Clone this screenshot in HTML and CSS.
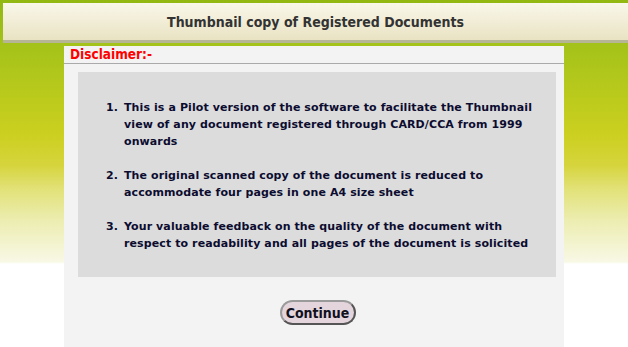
FILE: index.html
```html
<!DOCTYPE html>
<html lang="en">
<head>
    <meta charset="UTF-8">
    <title>Thumbnail copy of Registered Documents</title>
    <link rel="stylesheet" href="styles.css">
</head>
<body>

    <div class="page-header">
        <h1 class="page-title">Thumbnail copy of Registered Documents</h1>
    </div>

    <div class="panel">
        <div class="panel-head">Disclaimer:-</div>
        <div class="notice-box">
            <ol class="notice-list">
                <li>This is a Pilot version of the software to facilitate the Thumbnail view of any document registered through CARD/CCA from 1999 onwards</li>
                <li>The original scanned copy of the document is reduced to accommodate four pages in one A4 size sheet</li>
                <li>Your valuable feedback on the quality of the document with respect to readability and all pages of the document is solicited</li>
            </ol>
        </div>
        <div class="actions">
            <button class="btn-continue" type="button">Continue</button>
        </div>
    </div>

</body>
</html>
```

FILE: styles.css
```css
/* general */
body {
    margin: 0;
    min-height: 347px;
    background: #fff linear-gradient(to bottom,
        #92b814 0px,
        #a4c21a 45px,
        #bccb1c 100px,
        #ccd020 135px,
        #d6d43c 165px,
        #e2e27a 190px,
        #ecedb0 220px,
        #f8f8e6 262px,
        #ffffff 264px) no-repeat;
    background-size: 100% 264px;
    font-family: "DejaVu Sans", sans-serif;
}

/* header bar */
.page-header {
    margin: 3px 0 0 3px;
    height: 37px;
    border-bottom: 3px solid #b6b696;
    background: linear-gradient(to bottom, #f9f7ea, #e9e3c3);
    display: flex;
    align-items: center;
    justify-content: center;
}
.page-title {
    margin: 0;
    font-family: "DejaVu Sans Condensed", "DejaVu Sans", sans-serif;
    font-size: 14px;
    font-weight: bold;
    color: #333333;
}

/* content panel */
.panel {
    width: 500px;
    margin: 3px auto 0;
    padding-bottom: 30px;
    background-color: #f3f3f3;
}
.panel-head {
    height: 17px;
    padding-left: 6px;
    border-bottom: 1px solid #aaaaaa;
    color: #ff0000;
    font-family: "DejaVu Sans Condensed", "DejaVu Sans", sans-serif;
    font-size: 13.5px;
    font-weight: bold;
    line-height: 17px;
}
.notice-box {
    height: 205px;
    margin: 8px 8px 0 14px;
    padding-top: 27px;
    box-sizing: border-box;
    background-color: #dcdcdc;
}
.notice-list {
    margin: 0;
    padding: 0 20px 0 44px;
    color: #0c0c30;
    font-size: 11px;
    font-weight: bold;
    line-height: 17px;
    letter-spacing: 0.1px;
}
.notice-list li { margin-bottom: 17px; padding-left: 2px; }

/* button */
.actions {
    display: flex;
    justify-content: center;
    padding: 23px 0 0 7px;
}
.btn-continue {
    width: 76px;
    height: 25px;
    padding: 0;
    border: 2px solid;
    border-color: #9a9a9a #555555 #555555 #9a9a9a;
    border-radius: 13px;
    background-color: #e4d4dc;
    color: #10101e;
    font-family: "DejaVu Sans Condensed", "DejaVu Sans", sans-serif;
    font-size: 14px;
    font-weight: bold;
}
```
